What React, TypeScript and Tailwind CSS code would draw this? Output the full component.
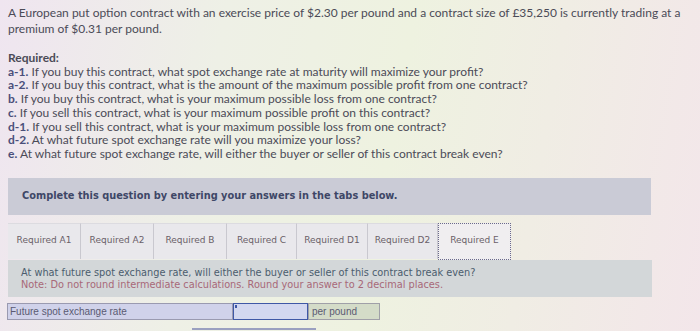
import React from "react";

const tabs = [
  { label: "Required A1", w: "w-[73px]" },
  { label: "Required A2", w: "w-[73px]" },
  { label: "Required B", w: "w-[73px]" },
  { label: "Required C", w: "w-[70px]" },
  { label: "Required D1", w: "w-[71px]" },
  { label: "Required D2", w: "w-[70px]" },
];

const reqs: [string, string][] = [
  ["a-1.", "If you buy this contract, what spot exchange rate at maturity will maximize your profit?"],
  ["a-2.", "If you buy this contract, what is the amount of the maximum possible profit from one contract?"],
  ["b.", "If you buy this contract, what is your maximum possible loss from one contract?"],
  ["c.", "If you sell this contract, what is your maximum possible profit on this contract?"],
  ["d-1.", "If you sell this contract, what is your maximum possible loss from one contract?"],
  ["d-2.", "At what future spot exchange rate will you maximize your loss?"],
  ["e.", "At what future spot exchange rate, will either the buyer or seller of this contract break even?"],
];

export default function App() {
  return (
    <div className="w-[700px] h-[331px] overflow-hidden bg-[linear-gradient(100deg,#efe5f0_0%,#eef0e6_30%,#eef2e0_55%,#f0ede4_75%,#f3e6ea_100%)] text-[#4b4b57]">
      <div className="pt-[5px] pl-[8px] w-[690px] font-['Lato',sans-serif] text-[12px] leading-[15.5px]">
        <p>
          A European put option contract with an exercise price of $2.30 per pound and a contract size of £35,250 is currently trading at a premium of $0.31 per pound.
        </p>
        <div className="mt-[15px] leading-[13.7px]">
          <p className="font-bold">Required:</p>
          {reqs.map(([k, t]) => (
            <p key={k}>
              <span className="font-bold text-[#4a4f7a]">{k}</span> {t}
            </p>
          ))}
        </div>
      </div>

      <div className="ml-[8px] mt-[17px] w-[643px] h-[37px] bg-[#cacbd6] flex items-center pl-[14px] font-['DejaVu_Sans',sans-serif] font-bold text-[9.8px] text-[#3e4767]">
        Complete this question by entering your answers in the tabs below.
      </div>

      <div className="ml-[8px] mt-[8px] flex font-['DejaVu_Sans',sans-serif] text-[9px] text-[#6a5f68]">
        {tabs.map((t) => (
          <div
            key={t.label}
            className={`${t.w} h-[36px] flex items-center justify-center bg-[#e9e8ec] border-r border-[#c9c8cf] border-t border-t-[#dcdbe0]`}
          >
            {t.label}
          </div>
        ))}
        <div className="w-[73px] h-[37px] flex items-center justify-center bg-[#f0eef0] border border-dotted border-[#6b6a8c]">
          Required E
        </div>
      </div>

      <div className="ml-[8px] w-[644px] h-[37px] bg-[#d3d7d9] pl-[13px] pt-[7px] font-['DejaVu_Sans',sans-serif] text-[9.75px] leading-[12px]">
        <p className="text-[#4b5d6e]">At what future spot exchange rate, will either the buyer or seller of this contract break even?</p>
        <p className="text-[#a86878]">Note: Do not round intermediate calculations. Round your answer to 2 decimal places.</p>
      </div>

      <div className="ml-[7px] mt-[6px] flex h-[17px] font-['Liberation_Sans',sans-serif] text-[10px] text-[#5a5a72]">
        <div className="w-[226px] border border-[#9a9ab0] bg-[#d0d2ea] pl-[2px] flex items-center">Future spot exchange rate</div>
        <div className="w-[75px] border-[1.5px] border-[#3f58a6] bg-[#d3d8f0] relative">
          <span className="absolute left-[1px] top-[1px] w-[2px] h-[3px] bg-[#3f58a6]" />
        </div>
        <div className="w-[72px] border border-[#a0a0a8] bg-[#d4dcc8] pl-[3px] flex items-center">per pound</div>
      </div>
      <div className="ml-[192px] mt-[8px] w-[124px] h-[2px] bg-[#9aa0c0]" />
    </div>
  );
}
